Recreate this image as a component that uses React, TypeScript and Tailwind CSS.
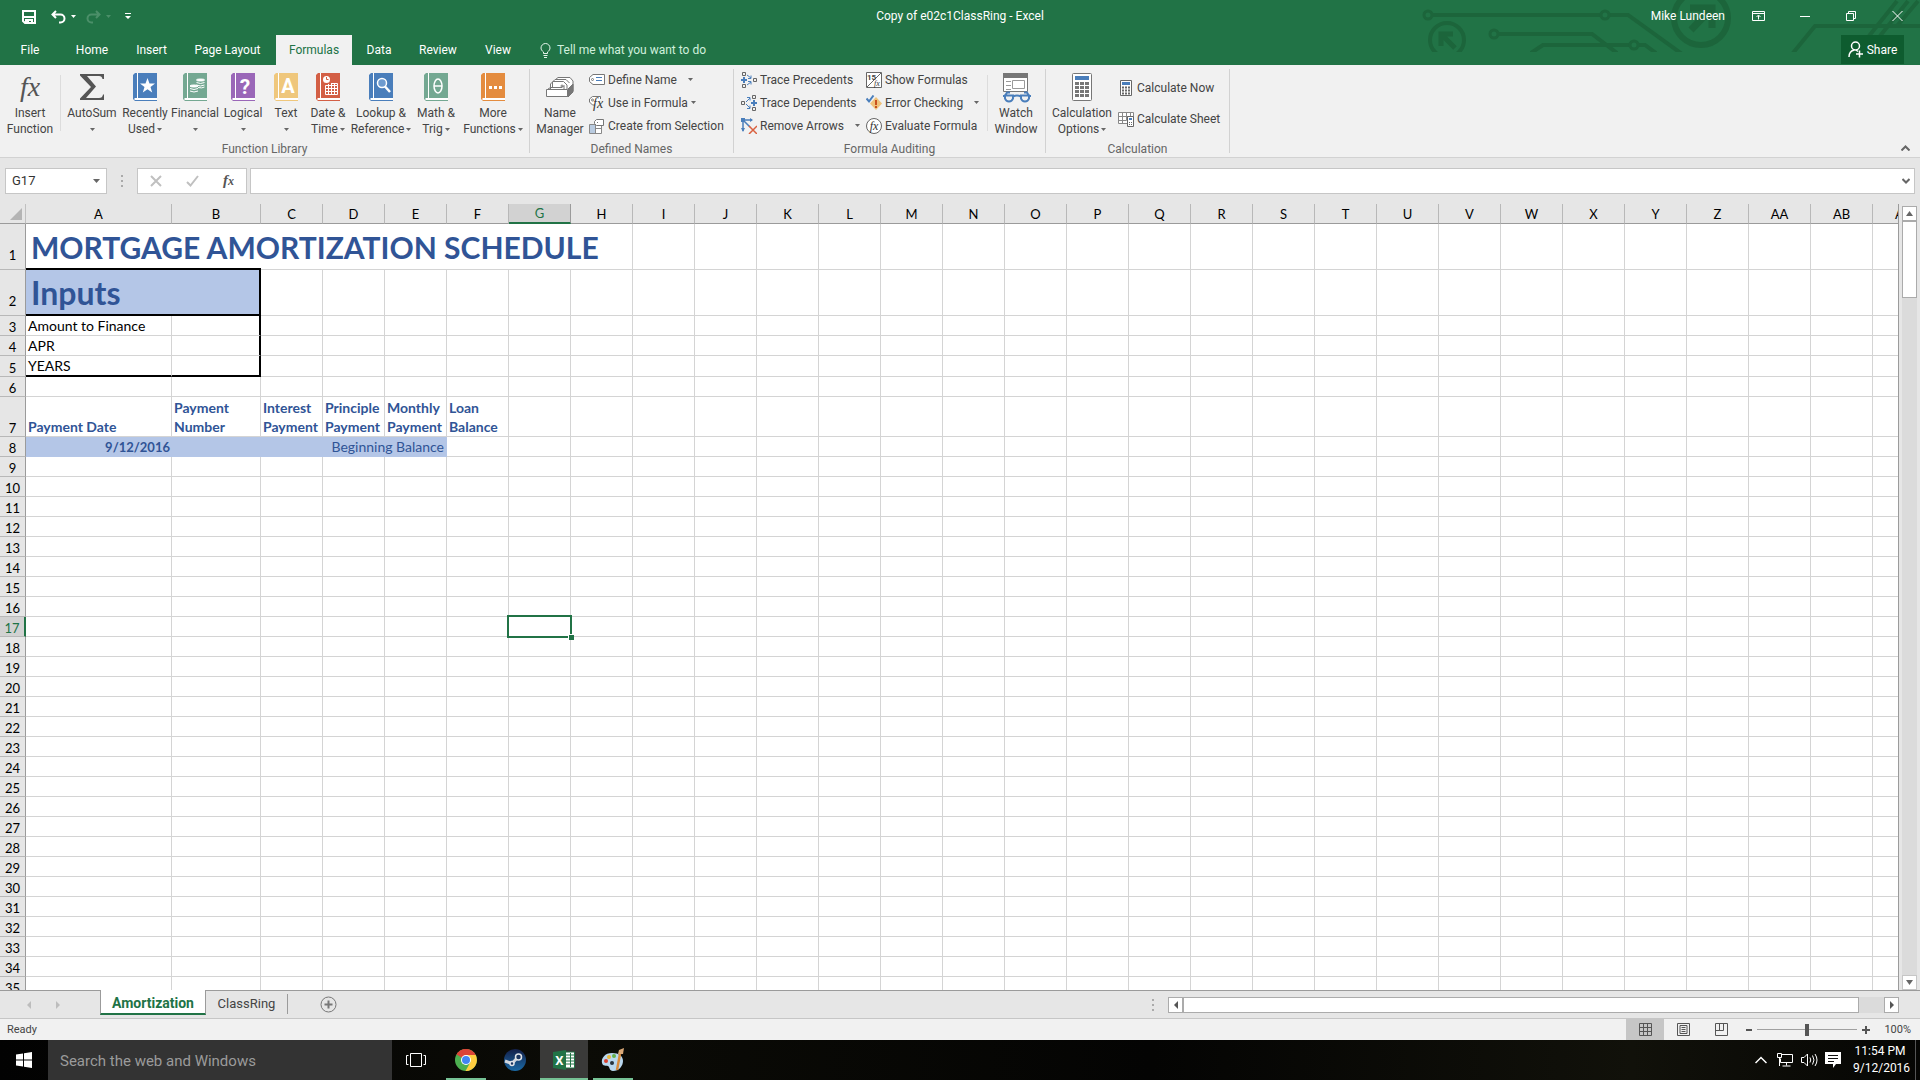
import type { ReactNode } from 'react';

const ROW_HEADER_WIDTH = 26;

const COLUMN_NAMES = [...'ABCDEFGHIJKLMNOPQRSTUVWXYZ'.split(''), 'AA', 'AB', 'AC'];

const columnWidth = (name: string) => (name === 'A' ? 146 : name === 'B' ? 89 : 62);

const rowHeight = (row: number) => {
    if (row <= 2) return 46;
    if (row === 5) return 21;
    if (row === 7) return 40;
    return 20;
};

const ROWS = Array.from({ length: 35 }, (_, i) => i + 1);

const TABLE_WIDTH = COLUMN_NAMES.reduce((sum, name) => sum + columnWidth(name), ROW_HEADER_WIDTH);

interface Cell {
    text?: string;
    className: string;
    span?: number;
}

const GRID = 'border-r border-b border-[#d4d4d4]';
const HEADING = 'px-0.5 align-bottom text-[14px] leading-[19px] font-bold text-[#305496] border-r border-b border-[#d4d4d4]';
const NO_RIGHT = 'border-b border-[#d4d4d4]';

const CELLS: Record<string, Cell> = {
    A1: {
        text: 'MORTGAGE AMORTIZATION SCHEDULE',
        className: 'pl-[5px] align-bottom whitespace-nowrap text-[30px] leading-[42px] font-bold text-[#305496] border-b-2 border-black',
    },
    B1: { className: 'border-b-2 border-black' },
    C1: { className: NO_RIGHT },
    D1: { className: NO_RIGHT },
    E1: { className: NO_RIGHT },
    F1: { className: NO_RIGHT },
    G1: { className: NO_RIGHT },
    A2: {
        text: 'Inputs',
        span: 2,
        className: 'pl-[5px] align-bottom bg-[#b4c6e7] text-[32px] leading-[42px] font-bold text-[#305496] border-r-2 border-b-2 border-black',
    },
    A3: { text: 'Amount to Finance', className: 'pl-0.5 align-bottom text-[14px] leading-[18px] whitespace-nowrap border-r border-b border-[#d4d4d4]' },
    A4: { text: 'APR', className: 'pl-0.5 align-bottom text-[14px] leading-[18px] border-r border-b border-[#d4d4d4]' },
    A5: { text: 'YEARS', className: 'pl-0.5 align-bottom text-[14px] leading-[18px] border-r border-b-2 border-r-[#d4d4d4] border-b-black' },
    B3: { className: 'border-r-2 border-b border-r-black border-b-[#d4d4d4]' },
    B4: { className: 'border-r-2 border-b border-r-black border-b-[#d4d4d4]' },
    B5: { className: 'border-r-2 border-b-2 border-black' },
    A7: { text: 'Payment Date', className: HEADING },
    B7: { text: 'Payment Number', className: HEADING },
    C7: { text: 'Interest Payment', className: HEADING },
    D7: { text: 'Principle Payment', className: HEADING },
    E7: { text: 'Monthly Payment', className: HEADING },
    F7: { text: 'Loan Balance', className: HEADING },
    A8: { text: '9/12/2016', className: 'pr-0.5 bg-[#b4c6e7] text-right text-[13px] leading-[19px] font-bold text-[#305496]' },
    B8: { className: 'bg-[#b4c6e7]' },
    C8: { className: 'bg-[#b4c6e7]' },
    D8: {
        text: 'Beginning Balance',
        span: 2,
        className: 'pr-[3px] bg-[#b4c6e7] text-right text-[14px] leading-[18px] whitespace-nowrap text-[#305496]',
    },
};

// Cells swallowed by a colSpan on their left
const COVERED = new Set(['B2', 'E8']);

const SELECTED = { column: 'G', row: 17 };

function Caret({ className = 'text-[#666]' }: { className?: string }) {
    return (
        <svg className={`inline-block shrink-0 ${className}`} width="5" height="3" viewBox="0 0 5 3" aria-hidden="true">
            <path d="M0 0h5L2.5 3z" fill="currentColor" />
        </svg>
    );
}

/* ---------- Title bar ---------- */

function CircuitPattern() {
    return (
        <svg className="pointer-events-none absolute top-0 right-0 z-10" width="500" height="52" viewBox="1420 0 500 52" fill="none" stroke="#1c653b" strokeWidth="4" aria-hidden="true">
            <circle cx="1428" cy="15" r="4" strokeWidth="3" />
            <path d="M1432 15H1601M1609 15H1628L1682 54" />
            <circle cx="1605" cy="15" r="4" strokeWidth="3" />
            <circle cx="1447" cy="40" r="17" />
            <path d="M1453 34h-12v12M1441 34l14 14" strokeWidth="5" />
            <circle cx="1494" cy="34" r="4" strokeWidth="3" />
            <path d="M1498 34H1592L1617 53" />
            <path d="M1531 53L1543 45H1630M1638 45H1645L1656 53" />
            <circle cx="1634" cy="45" r="4" strokeWidth="3" />
            <circle cx="1701" cy="18" r="27" strokeWidth="6" />
            <path d="M1690 8h22v20M1712 8l-21 22" strokeWidth="7" />
            <path d="M1793 53L1815 26H1920M1869 36L1897 1M1880 36L1908 1M1897 26L1918 1" />
        </svg>
    );
}

function TitleBar() {
    return (
        <header className="relative h-[35px] bg-[#217346] text-white">
            <CircuitPattern />
            <div className="relative z-20 grid h-full grid-cols-[1fr_auto_1fr] items-center pb-1.5">
                <div className="flex items-center pt-1 pl-[22px]">
                    <button aria-label="Save">
                        <svg width="14" height="14" viewBox="0 0 14 14" fill="none" stroke="#fff" strokeWidth="2">
                            <path d="M1 1h12v12H3L1 11zM2 7h10M4 13v-3h6v3" />
                            <path d="M6 11v2" />
                        </svg>
                    </button>
                    <button aria-label="Undo" className="ml-[15px]">
                        <svg width="15" height="14" viewBox="0 0 15 14" fill="none" stroke="#fff" strokeWidth="2">
                            <path d="M5 1L1.500 4.500 5 8M2 4.500h7.500a4 4 0 0 1 0 8H8" />
                        </svg>
                    </button>
                    <button aria-label="Undo list" className="ml-[5px] flex"><Caret className="text-white" /></button>
                    <button aria-label="Redo" disabled className="ml-2.5">
                        <svg width="15" height="14" viewBox="0 0 15 14" fill="none" stroke="#4b8f69" strokeWidth="2">
                            <path d="M10 1l3.500 3.500L10 8M13 4.500H5.500a4 4 0 0 0 0 8H7" />
                        </svg>
                    </button>
                    <button aria-label="Redo list" disabled className="ml-[5px] flex"><Caret className="text-[#4b8f69]" /></button>
                    <button aria-label="Customize Quick Access Toolbar" className="ml-3.5">
                        <svg width="6" height="7" viewBox="0 0 6 7" fill="#fff"><path d="M0 0h6v1H0zM0 3h6L3 6z" /></svg>
                    </button>
                </div>
                <h1 className="pt-[3px] text-[12px] leading-4">Copy of e02c1ClassRing - Excel</h1>
                <div className="flex items-center justify-end pt-[3px] pr-[17px]">
                    <span className="text-[12px] leading-4">Mike Lundeen</span>
                    <button aria-label="Ribbon Display Options" className="ml-[27px]">
                        <svg width="13" height="10" viewBox="0 0 13 10" fill="none" stroke="#fff">
                            <path d="M.5.5h12v9H.5zM.5 2.500h12M6.500 8.500v-4M4.500 6l2-2 2 2" />
                        </svg>
                    </button>
                    <button aria-label="Minimize" className="ml-[35px]">
                        <svg width="10" height="10" viewBox="0 0 10 10" stroke="#fff"><path d="M0 5.500h10" /></svg>
                    </button>
                    <button aria-label="Restore" className="ml-9">
                        <svg width="10" height="10" viewBox="0 0 10 10" fill="none" stroke="#fff">
                            <path d="M.5 2.500h7v7h-7zM2.500 2.500v-2h7v7h-2" />
                        </svg>
                    </button>
                    <button aria-label="Close" className="ml-9">
                        <svg width="11" height="10" viewBox="0 0 11 10" stroke="#fff"><path d="M.5 0l10 10M10.500 0L.5 10" /></svg>
                    </button>
                </div>
            </div>
        </header>
    );
}

const TABS = [
    { label: 'File', className: 'w-[60px]' },
    { label: 'Home', className: 'w-16' },
    { label: 'Insert', className: 'w-[55px]' },
    { label: 'Page Layout', className: 'w-[97px]' },
    { label: 'Formulas', className: 'w-[76px]' },
    { label: 'Data', className: 'w-[54px]' },
    { label: 'Review', className: 'w-16' },
    { label: 'View', className: 'w-14' },
];

function TabBar() {
    return (
        <nav className="flex h-[30px] bg-[#217346] text-[12px] leading-[30px] text-white" aria-label="Ribbon tabs">
            {TABS.map((tab) => (
                <button
                    key={tab.label}
                    className={`${tab.className} text-center whitespace-nowrap ${tab.label === 'Formulas' ? 'bg-[#f1f1f1] text-[#217346]' : ''}`}
                >
                    {tab.label}
                </button>
            ))}
            <button className="ml-3.5 flex items-center gap-1.5 text-[#d0f0dd]">
                <svg width="11" height="15" viewBox="0 0 11 15" fill="none" stroke="#e6f5ec">
                    <path d="M3.500 10.500V9C2 8 1 6.500 1 5a4.500 4.500 0 0 1 9 0c0 1.500-1 3-2.500 4v1.500zM3.500 12.500h4M4 14.500h3" />
                </svg>
                Tell me what you want to do
            </button>
            <button className="relative z-20 mr-4 ml-auto flex h-[29px] w-[63px] items-center justify-center gap-1 bg-[#0e5c2f]">
                <svg width="15" height="17" viewBox="0 0 15 17" fill="none" stroke="#fff" strokeWidth="1.500">
                    <circle cx="7.500" cy="5" r="4" />
                    <path d="M1 16c0-4 2.500-6.500 5.500-7M8 9l2 1.500M8 13h7M11.500 9.500v7" />
                </svg>
                Share
            </button>
        </nav>
    );
}

/* ---------- Ribbon icons ---------- */

function Book({ color, children }: { color: string; children: ReactNode }) {
    return (
        <svg width="24" height="28" viewBox="0 0 24 28" aria-hidden="true">
            <path d="M2 0h22v28H2l-2-2V2z" fill={color} />
            <path d="M4.500 0v25" stroke="#fff" />
            <path d="M1 26l1-1h22v2H2z" fill="#fff" />
            {children}
        </svg>
    );
}

function LibraryIcon({ name }: { name: string }) {
    switch (name) {
        case 'AutoSum':
            return (
                <svg width="24" height="28" viewBox="0 0 24 28" aria-hidden="true">
                    <path d="M0 1h24v5h-1.500Q22 3 19 3H7l9 10.500L6 25h13q3.500 0 4-3.500h1V27H0v-1.500L11 14 0 2.500z" fill="#555" />
                </svg>
            );
        case 'Recently Used':
            return (
                <Book color="#4a7ebb">
                    <path d="M14.500 5l2 5.500h5.500l-4.500 3.500 1.700 5.500-4.700-3.300-4.700 3.300 1.700-5.500L7 10.500h5.500z" fill="#fff" />
                </Book>
            );
        case 'Financial':
            return (
                <Book color="#74a892">
                    <g stroke="#fff" fill="#fff">
                        <ellipse cx="17.500" cy="7" rx="4" ry="1" />
                        <path d="M13.500 9.500q4 2 8 0M13.500 12q4 2 8 0M15 14.500q4 1 6.500-.5" fill="none" />
                        <ellipse cx="11" cy="13" rx="4" ry="1" />
                        <path d="M7 15.500q4 2 8 0M7 18q4 2 8 0" fill="none" />
                    </g>
                </Book>
            );
        case 'Logical':
            return (
                <Book color="#9a67b8">
                    <text x="14" y="21" textAnchor="middle" fontSize="21" fontWeight="700" fill="#fff">?</text>
                </Book>
            );
        case 'Text':
            return (
                <Book color="#efc77c">
                    <text x="14" y="20" textAnchor="middle" fontSize="20" fontWeight="700" fill="#fff">A</text>
                </Book>
            );
        case 'Date & Time':
            return (
                <Book color="#d35f45">
                    <circle cx="10.500" cy="6.500" r="3.500" fill="#fff" />
                    <path d="M10.500 4v2.500h2" stroke="#d35f45" fill="none" />
                    <path d="M9.500 12.500h12v9h-12zM9.500 15.500h12M9.500 18.500h12M12.500 11v10M15.500 10v11M18.500 10v11M15 10.500h6.500v2" stroke="#fff" fill="none" />
                </Book>
            );
        case 'Lookup & Reference':
            return (
                <Book color="#4a7ebb">
                    <circle cx="13" cy="10" r="4.500" stroke="#fff" strokeWidth="1.500" fill="#6e9bcf" />
                    <path d="M16 13.500l5 5.500" stroke="#fff" strokeWidth="2.500" />
                </Book>
            );
        case 'Math & Trig':
            return (
                <Book color="#74a892">
                    <ellipse cx="14" cy="13" rx="4" ry="7" stroke="#fff" strokeWidth="1.500" fill="none" />
                    <path d="M10 13h8" stroke="#fff" strokeWidth="1.500" />
                </Book>
            );
        default:
            return (
                <Book color="#e48c3f">
                    <path d="M8 13h3v3H8zM13 13h3v3h-3zM18 13h3v3h-3z" fill="#fff" />
                </Book>
            );
    }
}

function NameManagerIcon() {
    return (
        <svg width="28" height="28" viewBox="0 0 28 28" fill="none" stroke="#777" aria-hidden="true">
            <path d="M9 12V7l3-2.500h12l3 3.500v10l-6 6" fill="#fff" />
            <path d="M22 16l5-5v8l-5 5z" fill="#777" />
            <path d="M6.500 15V9L9 6.500h11L23.500 10M4.500 16v-5L7 8.500h10.500L21 12v4" fill="#fff" />
            <path d="M2 16l2.500-1.500H16l2-2v4" />
            <circle cx="16" cy="13" r="1" />
            <path d="M.5 16.500h21v7H.5z" fill="#fff" />
        </svg>
    );
}

function WatchIcon() {
    return (
        <svg width="30" height="30" viewBox="-1 0 30 30" fill="none" aria-hidden="true">
            <path d="M1.500 1.500h24v17h-24z" fill="#fff" stroke="#777" />
            <path d="M1 0h25v5H1z" fill="#777" />
            <path d="M4 8.500h5M4 12.500h5M4 16.500h5M10.500 7.500h12v8h-12z" stroke="#999" />
            <path d="M1 19h28v9H1z" fill="#f1f1f1" />
            <path d="M3 23l2-3.500h3M27 23l-2-3.500h-3M3 22.500h8v3q-1 3-4 3t-4-3zM19 22.500h8v3q-1 3-4 3t-4-3zM11 23.500q4-2 8 0M1 23h2M27 23h2" stroke="#4a7ebb" strokeWidth="2" />
        </svg>
    );
}

function CalculatorIcon({ small }: { small?: boolean }) {
    return (
        <svg width={small ? 12 : 20} height={small ? 16 : 28} viewBox={small ? '0 0 12 16' : '0 0 20 28'} aria-hidden="true">
            {small ? (
                <>
                    <path d="M.5.5h11v15H.5z" fill="#fff" stroke="#666" />
                    <path d="M2 2h8v3H2z" fill="#4a7ebb" />
                    <path d="M2 7.500h8M2 10.500h8M2 13.500h8" stroke="#666" strokeWidth="2" strokeDasharray="2 1" />
                </>
            ) : (
                <>
                    <rect x=".5" y=".5" width="19" height="27" rx="1" fill="#fff" stroke="#777" />
                    <path d="M3 3h14v4H3z" fill="#4a7ebb" />
                    <path d="M3 10.500h14M3 14.500h14M3 18.500h14M3 22.500h14" stroke="#777" strokeWidth="3" strokeDasharray="4 1" />
                </>
            )}
        </svg>
    );
}

function SmallIcon({ name }: { name: string }) {
    return (
        <svg width="16" height="16" viewBox="0 0 16 16" fill="none" aria-hidden="true" className="shrink-0">
            {name === 'Define Name' && (
                <>
                    <path d="M4 2.500h11.500v10H4L.5 9.500v-4z" fill="#fff" stroke="#777" />
                    <circle cx="3.500" cy="7.500" r="1" stroke="#777" />
                    <path d="M7 5.500h6M7 8.500h6" stroke="#4a7ebb" />
                </>
            )}
            {name === 'Use in Formula' && (
                <>
                    <path d="M6 10H3.500L.5 7V4l3-2.500h8V4" fill="#fff" stroke="#777" />
                    <circle cx="3.500" cy="5" r="1" stroke="#777" />
                    <text x="4" y="13" fontSize="14" fontStyle="italic" fill="#333" className="font-['Liberation_Serif',serif]">fx</text>
                </>
            )}
            {name === 'Create from Selection' && (
                <>
                    <path d="M.5 6.500h12v9H.5zM.5 10.500h12M6.500 6.500v9" fill="#fff" stroke="#888" />
                    <path d="M1 7h5v8H1z" fill="#b9cbe0" />
                    <path d="M7.500 1.500h7v6h-7l-2-2v-2z" fill="#fff" stroke="#777" />
                    <path d="M8 4.500h1" stroke="#777" />
                </>
            )}
            {name === 'Trace Precedents' && (
                <>
                    <path d="M1.500.5h3v3h-3zM1.500 12.500h3v3h-3zM12.500 6.500h3v3h-3z" stroke="#666" />
                    <path d="M0 8h6M3 5v6" stroke="#4a7ebb" strokeWidth="2" />
                    <path d="M6 3l4 3M10 10l-4 3M10 3.500v3H7M10 12.500v-3H7" stroke="#4a7ebb" />
                </>
            )}
            {name === 'Trace Dependents' && (
                <>
                    <path d="M11.500.5h3v3h-3zM11.500 12.500h3v3h-3zM.5 6.500h3v3h-3z" stroke="#666" />
                    <path d="M10 8h6M13 5v6" stroke="#4a7ebb" strokeWidth="2" />
                    <path d="M5 7l4-4M5 9l4 4M6 2.500h3v3M6 13.500h3v-3" stroke="#4a7ebb" />
                </>
            )}
            {name === 'Remove Arrows' && (
                <>
                    <path d="M2 2v11M2 2h9M3 3l6 6" stroke="#4a7ebb" strokeWidth="1.500" />
                    <path d="M0 0h4v4H0zM9 0v4l3-2zM0 10h4l-2 4z" fill="#4a7ebb" />
                    <path d="M8 8l8 8M16 8l-8 8" stroke="#d9603f" strokeWidth="1.500" />
                </>
            )}
            {name === 'Show Formulas' && (
                <>
                    <path d="M.5.5h15v15H.5zM15 1L1 15" fill="#fff" stroke="#666" />
                    <text x="1" y="8" fontSize="8" fontWeight="700" fill="#444">15</text>
                    <text x="8" y="14" fontSize="8" fontStyle="italic" fill="#333" className="font-['Liberation_Serif',serif]">fx</text>
                </>
            )}
            {name === 'Error Checking' && (
                <>
                    <path d="M10 2l6 6.500-6 6.500-6-6.500z" fill="#f0c27a" />
                    <path d="M10 5v5M10 11v2" stroke="#c8501e" strokeWidth="2" />
                    <path d="M.5 3.500l2.500 3L7.500.5" stroke="#4a7ebb" strokeWidth="2" />
                </>
            )}
            {name === 'Evaluate Formula' && (
                <>
                    <circle cx="8" cy="8" r="7.500" fill="#fff" stroke="#666" />
                    <text x="8" y="12" textAnchor="middle" fontSize="12" fontStyle="italic" fill="#333" className="font-['Liberation_Serif',serif]">fx</text>
                </>
            )}
            {name === 'Calculate Sheet' && (
                <>
                    <path d="M.5 1.500h15v11H.5zM.5 5.500h15M.5 9.500h8M4.500 1.500v11M8.500 1.500v8M12.500 1.500v4" fill="#fff" stroke="#888" />
                    <path d="M9.500 5.500h6v10h-6z" fill="#fff" stroke="#666" />
                    <path d="M11 7h3v2h-3z" fill="#4a7ebb" />
                    <path d="M11 11.500h3M11 13.500h3" stroke="#666" strokeDasharray="1 1" />
                </>
            )}
        </svg>
    );
}

/* ---------- Ribbon ---------- */

function BigButton({ icon, first, second, caret, className }: {
    icon: ReactNode;
    first: string;
    second?: string;
    caret?: boolean;
    className: string;
}) {
    return (
        <button className={`flex shrink-0 flex-col items-center ${className}`}>
            <span className="flex h-8 items-start justify-center">{icon}</span>
            <span className="text-[12px] leading-4 whitespace-nowrap">{first}</span>
            <span className="flex h-4 items-center gap-0.5 text-[12px] leading-4 whitespace-nowrap">
                {second}
                {caret && <Caret />}
            </span>
        </button>
    );
}

function SmallButton({ name, caret, icon }: { name: string; caret?: string; icon?: ReactNode }) {
    return (
        <button className="flex h-[23px] items-center gap-[3px] text-[12px] leading-4 whitespace-nowrap">
            {icon ?? <SmallIcon name={name} />}
            {name}
            {caret !== undefined && <span className={`flex ${caret}`}><Caret /></span>}
        </button>
    );
}

function Group({ label, className, children }: { label: string; className: string; children: ReactNode }) {
    return (
        <section className={`flex shrink-0 flex-col ${className}`} aria-label={label}>
            <div className="flex h-[72px]">{children}</div>
            <h2 className="text-center text-[12px] leading-4 text-[#666]">{label}</h2>
        </section>
    );
}

const Divider = () => <div className="my-1 h-[84px] w-px shrink-0 bg-[#d2d2d2]" />;

const LIBRARY = [
    { name: 'AutoSum', first: 'AutoSum', className: 'w-[50px]' },
    { name: 'Recently Used', first: 'Recently', second: 'Used', className: 'w-14' },
    { name: 'Financial', first: 'Financial', className: 'w-11' },
    { name: 'Logical', first: 'Logical', className: 'w-[52px]' },
    { name: 'Text', first: 'Text', className: 'w-[34px]' },
    { name: 'Date & Time', first: 'Date &', second: 'Time', className: 'w-[50px]' },
    { name: 'Lookup & Reference', first: 'Lookup &', second: 'Reference', className: 'w-14' },
    { name: 'Math & Trig', first: 'Math &', second: 'Trig', className: 'w-[54px]' },
    { name: 'More Functions', first: 'More', second: 'Functions', className: 'w-[60px]' },
];

function Ribbon() {
    return (
        <div className="flex h-[93px] border-b border-[#d2d2d2] bg-[#f1f1f1] text-[#444]">
            <Group label="Function Library" className="w-[529px] pt-2">
                <BigButton
                    className="ml-[5px] w-[50px]"
                    first="Insert"
                    second="Function"
                    icon={(
                        <svg width="32" height="32" viewBox="0 0 32 32" aria-hidden="true">
                            <text x="16" y="23" textAnchor="middle" fontSize="28" fontStyle="italic" fill="#555" className="font-['Liberation_Serif',serif]">fx</text>
                        </svg>
                    )}
                />
                <div className="mt-0.5 mr-1.5 ml-[5px] h-14 w-px bg-[#dcdcdc]" />
                {LIBRARY.map((item) => (
                    <BigButton
                        key={item.name}
                        className={item.className}
                        first={item.first}
                        second={item.second}
                        caret
                        icon={<LibraryIcon name={item.name} />}
                    />
                ))}
            </Group>
            <Divider />
            <Group label="Defined Names" className="w-[203px] pt-2">
                <BigButton className="ml-1 w-[52px]" first="Name" second="Manager" icon={<NameManagerIcon />} />
                <div className="-mt-[5px] ml-[3px] flex flex-col">
                    <SmallButton name="Define Name" caret="ml-2" />
                    <SmallButton name="Use in Formula" caret="" />
                    <SmallButton name="Create from Selection" />
                </div>
            </Group>
            <Divider />
            <Group label="Formula Auditing" className="w-[311px] pt-2">
                <div className="-mt-[5px] ml-[7px] flex w-[125px] flex-col">
                    <SmallButton name="Trace Precedents" />
                    <SmallButton name="Trace Dependents" />
                    <SmallButton name="Remove Arrows" caret="ml-2" />
                </div>
                <div className="-mt-[5px] flex w-[121px] flex-col">
                    <SmallButton name="Show Formulas" />
                    <SmallButton name="Error Checking" caret="ml-2" />
                    <SmallButton name="Evaluate Formula" />
                </div>
                <div className="mt-0.5 h-14 w-px bg-[#dcdcdc]" />
                <BigButton className="ml-[3px] w-[50px]" first="Watch" second="Window" icon={<WatchIcon />} />
            </Group>
            <Divider />
            <Group label="Calculation" className="w-[183px] pt-2">
                <BigButton className="ml-1 w-[64px]" first="Calculation" second="Options" caret icon={<CalculatorIcon />} />
                <div className="mt-[3px] flex flex-col gap-2">
                    <SmallButton
                        name="Calculate Now"
                        icon={<span className="flex w-5 justify-end pr-0.5"><CalculatorIcon small /></span>}
                    />
                    <SmallButton
                        name="Calculate Sheet"
                        icon={<span className="flex w-5 justify-end"><SmallIcon name="Calculate Sheet" /></span>}
                    />
                </div>
            </Group>
            <Divider />
            <button aria-label="Collapse the Ribbon" className="mt-auto mr-2.5 mb-1.5 ml-auto">
                <svg width="9" height="6" viewBox="0 0 9 6" fill="none" stroke="#666" strokeWidth="2"><path d="M.5 5.500l4-4 4 4" /></svg>
            </button>
        </div>
    );
}

function DragDots() {
    return (
        <svg width="2" height="12" viewBox="0 0 2 12" fill="#aaa" aria-hidden="true">
            <path d="M0 0h2v2H0zM0 5h2v2H0zM0 10h2v2H0z" />
        </svg>
    );
}

function FormulaBar() {
    return (
        <div className="flex h-[46px] items-center bg-[#e6e6e6] px-[5px]">
            <div className="flex h-[26px] w-[102px] items-center border border-[#c6c6c6] bg-white pr-1.5">
                <input aria-label="Name Box" defaultValue="G17" className="min-w-0 flex-1 bg-transparent pl-1.5 text-[13px] leading-4 text-[#333] outline-none" />
                <button aria-label="Name Box list">
                    <svg width="7" height="4" viewBox="0 0 7 4" fill="#666"><path d="M0 0h7L3.500 4z" /></svg>
                </button>
            </div>
            <div className="flex w-[30px] justify-center"><DragDots /></div>
            <div className="flex h-[26px] w-[110px] items-center justify-around border border-[#c6c6c6] bg-white">
                <button aria-label="Cancel" disabled>
                    <svg width="12" height="12" viewBox="0 0 12 12" stroke="#c0c0c0" strokeWidth="2"><path d="M1 1l10 10M11 1L1 11" /></svg>
                </button>
                <button aria-label="Enter" disabled>
                    <svg width="13" height="12" viewBox="0 0 13 12" fill="none" stroke="#c0c0c0" strokeWidth="2"><path d="M1 7l3.500 3.500L12 1" /></svg>
                </button>
                <button aria-label="Insert Function" className="pb-0.5 font-['Liberation_Serif',serif] text-[15px] leading-5 font-bold text-[#555] italic">
                    f<span className="text-[12px]">x</span>
                </button>
            </div>
            <div className="ml-[3px] flex h-[26px] min-w-0 flex-1 items-center border border-[#c6c6c6] bg-white pr-1">
                <input aria-label="Formula Bar" className="min-w-0 flex-1 bg-transparent px-1 outline-none" />
                <button aria-label="Expand Formula Bar">
                    <svg width="8" height="6" viewBox="0 0 8 6" fill="none" stroke="#666" strokeWidth="2"><path d="M.5 1L4 4.500 7.500 1" /></svg>
                </button>
            </div>
        </div>
    );
}

/* ---------- Sheet ---------- */

function SheetGrid() {
    return (
        <table
            className="table-fixed border-separate border-spacing-0 font-[Lato,sans-serif] text-black"
            style={{ width: TABLE_WIDTH }}
        >
            <colgroup>
                <col style={{ width: ROW_HEADER_WIDTH }} />
                {COLUMN_NAMES.map((name) => (
                    <col key={name} style={{ width: columnWidth(name) }} />
                ))}
            </colgroup>
            <thead>
                <tr className="h-5">
                    <th className="h-5 border-r border-b border-r-[#c0c0c0] border-b-[#9b9b9b] bg-[#e6e6e6] p-0">
                        <svg className="mr-[3px] ml-auto" width="12" height="12" viewBox="0 0 12 12" aria-label="Select all">
                            <path d="M12 0v12H0z" fill="#b4b4b4" />
                        </svg>
                    </th>
                    {COLUMN_NAMES.map((name) => (
                        <th
                            key={name}
                            scope="col"
                            className={`h-5 p-0 text-[13px] leading-[18px] font-normal ${
                                name === SELECTED.column
                                    ? 'border-r border-b-2 border-r-[#9b9b9b] border-b-[#217346] bg-[#d2d2d2] text-[#217346]'
                                    : 'border-r border-b border-r-[#b8b8b8] border-b-[#9b9b9b] bg-[#e6e6e6]'
                            }`}
                        >
                            {name}
                        </th>
                    ))}
                </tr>
            </thead>
            <tbody>
                {ROWS.map((row) => (
                    <tr key={row} style={{ height: rowHeight(row) }}>
                        <th
                            scope="row"
                            className={`px-0 pt-0 align-bottom text-[13px] leading-4 font-normal ${row <= 2 ? 'pb-1.5' : 'pb-0'} ${
                                row === SELECTED.row
                                    ? 'border-r-2 border-b border-r-[#217346] border-b-[#b8b8b8] bg-[#d2d2d2] text-[#217346]'
                                    : 'border-r border-b border-r-[#9b9b9b] border-b-[#b8b8b8] bg-[#e6e6e6]'
                            }`}
                        >
                            {row}
                        </th>
                        {COLUMN_NAMES.map((name) => {
                            const key = `${name}${row}`;
                            if (COVERED.has(key)) return null;
                            const cell = CELLS[key];
                            const selected = name === SELECTED.column && row === SELECTED.row;
                            return (
                                <td key={key} colSpan={cell?.span} className={`relative p-0 ${cell?.className ?? GRID}`}>
                                    {cell?.text}
                                    {selected && (
                                        <div className="absolute -inset-0.5 z-10 border-2 border-[#217346]">
                                            <div className="absolute -right-1 -bottom-1 size-1.5 border-t border-l border-white bg-[#217346]" />
                                        </div>
                                    )}
                                </td>
                            );
                        })}
                    </tr>
                ))}
            </tbody>
        </table>
    );
}

function VerticalScrollbar() {
    return (
        <div className="flex w-[21px] shrink-0 flex-col bg-[#e6e6e6] px-[3px] pt-0.5">
            <button aria-label="Scroll up" className="flex h-[15px] items-center justify-center border border-[#ababab] bg-white">
                <svg width="7" height="5" viewBox="0 0 7 5" fill="#666"><path d="M3.500 0L7 5H0z" /></svg>
            </button>
            <div className="flex-1 bg-[#dbdbdb]">
                <div className="h-[77px] border border-[#ababab] bg-white" />
            </div>
            <button aria-label="Scroll down" className="flex h-[15px] items-center justify-center border border-[#c6c6c6] bg-white">
                <svg width="7" height="5" viewBox="0 0 7 5" fill="#666"><path d="M0 0h7L3.500 5z" /></svg>
            </button>
        </div>
    );
}

function SheetBar() {
    return (
        <div className="flex h-7 border-t border-[#9b9b9b] bg-[#e6e6e6] pr-[21px]">
            <div className="flex w-[100px] items-center pl-[27px]">
                <button aria-label="Previous sheets" disabled>
                    <svg width="4" height="8" viewBox="0 0 4 8" fill="#bdbdbd"><path d="M4 0v8L0 4z" /></svg>
                </button>
                <button aria-label="Next sheets" disabled className="ml-[25px]">
                    <svg width="4" height="8" viewBox="0 0 4 8" fill="#bdbdbd"><path d="M0 0v8l4-4z" /></svg>
                </button>
            </div>
            <button className="-mt-px h-[25px] w-[106px] border-x border-b-2 border-x-[#9b9b9b] border-b-[#217346] bg-white pt-0.5 text-[14px] leading-4 font-bold text-[#217346]">
                Amortization
            </button>
            <button className="mt-[3px] mb-1 w-[82px] border-r border-[#9b9b9b] text-[13px] leading-4 text-[#444]">ClassRing</button>
            <button aria-label="New sheet" className="ml-8">
                <svg width="17" height="17" viewBox="0 0 17 17" fill="none" stroke="#777">
                    <circle cx="8.500" cy="8.500" r="7.500" />
                    <path d="M4.500 8.500h8M8.500 4.500v8" strokeWidth="2" />
                </svg>
            </button>
            <div className="ml-auto flex w-[747px] max-w-[50%] items-center">
                <DragDots />
                <button aria-label="Scroll left" className="ml-3.5 flex h-4 w-[15px] items-center justify-center border border-[#ababab] bg-white">
                    <svg width="4" height="8" viewBox="0 0 4 8" fill="#555"><path d="M4 0v8L0 4z" /></svg>
                </button>
                <div className="h-4 flex-1 bg-[#dbdbdb] pr-[25px]">
                    <div className="h-full border border-[#ababab] bg-white" />
                </div>
                <button aria-label="Scroll right" className="flex h-4 w-[15px] items-center justify-center border border-[#ababab] bg-white">
                    <svg width="4" height="8" viewBox="0 0 4 8" fill="#555"><path d="M0 0v8l4-4z" /></svg>
                </button>
            </div>
        </div>
    );
}

function StatusBar() {
    return (
        <footer className="flex h-[22px] items-center border-t border-[#c6c6c6] bg-[#f1f1f1] pr-[9px] pl-[7px] text-[11px] leading-4 text-[#444]">
            <span>Ready</span>
            <button aria-label="Normal view" className="ml-auto flex h-full w-[38px] items-center justify-center bg-[#c6c6c6]">
                <svg width="13" height="13" viewBox="0 0 13 13" fill="none" stroke="#555"><path d="M.5.5h12v12H.5zM.5 4.500h12M.5 8.500h12M4.500.5v12M8.500.5v12" /></svg>
            </button>
            <button aria-label="Page Layout view" className="flex w-[38px] justify-center">
                <svg width="13" height="13" viewBox="0 0 13 13" fill="none" stroke="#555"><path d="M.5.5h12v12H.5zM3 2.500h7v8H3zM4.500 4.500h4M4.500 6.500h4M4.500 8.500h4" /></svg>
            </button>
            <button aria-label="Page Break Preview" className="flex w-[38px] justify-center">
                <svg width="13" height="13" viewBox="0 0 13 13" fill="none" stroke="#555"><path d="M.5.5h12v12H.5zM4.500.5v7M8.500.5v7h-8" /></svg>
            </button>
            <button aria-label="Zoom out" className="ml-1.5 h-0.5 w-1.5 bg-[#555]" />
            <input
                type="range"
                aria-label="Zoom"
                min={0}
                max={100}
                defaultValue={50}
                className="mx-[5px] h-3 w-[100px] appearance-none bg-transparent bg-[linear-gradient(#a0a0a0,#a0a0a0)] bg-[length:100%_1px] bg-center bg-no-repeat [&::-webkit-slider-thumb]:h-3 [&::-webkit-slider-thumb]:w-1 [&::-webkit-slider-thumb]:appearance-none [&::-webkit-slider-thumb]:bg-[#555]"
            />
            <button aria-label="Zoom in">
                <svg width="8" height="8" viewBox="0 0 8 8" stroke="#555" strokeWidth="2"><path d="M0 4h8M4 0v8" /></svg>
            </button>
            <button className="w-[41px] text-right">100%</button>
        </footer>
    );
}

/* ---------- Windows taskbar ---------- */

function ChromeIcon() {
    return (
        <svg width="22" height="22" viewBox="0 0 22 22" aria-hidden="true">
            <circle cx="11" cy="11" r="11" fill="#4caf50" />
            <path d="M11 11L1.500 5.500A11 11 0 0 1 20.500 5.500z" fill="#db4437" />
            <path d="M1.500 5.500A11 11 0 0 1 20.500 6H11z" fill="#db4437" />
            <path d="M11 6h9.700A11 11 0 0 1 10.500 22l5-9z" fill="#ffcd40" />
            <circle cx="11" cy="11" r="5" fill="#fff" />
            <circle cx="11" cy="11" r="4" fill="#4285f4" />
        </svg>
    );
}

function SteamIcon() {
    return (
        <svg width="22" height="22" viewBox="0 0 22 22" aria-hidden="true">
            <defs>
                <linearGradient id="steam" x1="0" y1="0" x2="0" y2="1">
                    <stop offset="0" stopColor="#14204a" />
                    <stop offset="1" stopColor="#1b6aa5" />
                </linearGradient>
            </defs>
            <circle cx="11" cy="11" r="11" fill="url(#steam)" />
            <path d="M1 12l7 2.500L14 8" stroke="#cfd5dc" strokeWidth="3" fill="none" />
            <circle cx="14.500" cy="8" r="3" fill="#1b3560" stroke="#dfe3e8" strokeWidth="1.500" />
            <circle cx="8" cy="14.500" r="2" fill="#1b3560" stroke="#dfe3e8" strokeWidth="1.500" />
        </svg>
    );
}

function ExcelIcon() {
    return (
        <svg width="22" height="20" viewBox="0 0 22 20" aria-hidden="true">
            <path d="M12 2h9.500v16H12z" fill="#fff" stroke="#217346" />
            <path d="M13 5h8M13 8h8M13 11h8M13 14h8M17.500 3v14" stroke="#217346" />
            <path d="M0 2l13-2v20L0 18z" fill="#217346" />
            <text x="6.500" y="15" textAnchor="middle" fontSize="13" fontWeight="700" fill="#fff">X</text>
        </svg>
    );
}

function PaintIcon() {
    return (
        <svg width="24" height="24" viewBox="0 0 24 24" aria-hidden="true">
            <path d="M11 5C4 5 0 10 1 15c1 4 4 2 6 3s1 5 5 5c6 0 10-5 10-10S18 5 11 5z" fill="#b9d7ee" />
            <circle cx="5" cy="13" r="2" fill="#d8402f" />
            <circle cx="8" cy="9" r="2" fill="#e9b93a" />
            <circle cx="13" cy="8" r="2" fill="#64b04a" />
            <circle cx="11" cy="15" r="2" fill="#26323c" />
            <path d="M16 22l3-16" stroke="#d98a3a" strokeWidth="2.500" />
            <path d="M17 6l1-4 5-2-1 6z" fill="#d9a877" />
        </svg>
    );
}

function Taskbar() {
    return (
        <div className="flex h-10 bg-[#070705] bg-[linear-gradient(90deg,#020202,#0b0b06_30%,#040403_60%,#11110a_85%,#060604)] text-white">
            <button aria-label="Start" className="flex w-12 items-center justify-center">
                <svg width="16" height="16" viewBox="0 0 16 16" fill="#fff"><path d="M0 2.500l7-1v6H0zM8 1.200L16 0v7.500H8zM0 8.500h7v6l-7-1zM8 8.500h8V16l-8-1.200z" /></svg>
            </button>
            <input
                aria-label="Search the web and Windows"
                placeholder="Search the web and Windows"
                className="w-[344px] bg-[#333] px-3 pt-0.5 text-[15px] leading-5 outline-none placeholder:text-[#9b9b9b]"
            />
            <button aria-label="Task View" className="flex w-12 items-center justify-center">
                <svg width="20" height="14" viewBox="0 0 20 14" fill="none" stroke="#fff"><path d="M4.500.5h11v13h-11zM2.500 2.500h-2v9h2M17.500 2.500h2v9h-2" /></svg>
            </button>
            <button aria-label="Google Chrome" className="mx-1.5 flex w-10 items-center justify-center border-b-2 border-[#76c295] pt-0.5">
                <ChromeIcon />
            </button>
            <button aria-label="Steam" className="flex w-[46px] items-center justify-center"><SteamIcon /></button>
            <button aria-label="Excel" className="ml-0.5 flex w-12 items-center justify-center border-b-2 border-[#76c295] bg-[#3a3a39] pt-0.5"><ExcelIcon /></button>
            <button aria-label="Paint" className="ml-[5px] flex w-10 items-center justify-center border-b-2 border-[#76c295] pt-0.5"><PaintIcon /></button>
            <div className="mr-1 ml-auto flex items-center border-r border-[#555] pr-2">
                <button aria-label="Show hidden icons">
                    <svg width="12" height="8" viewBox="0 0 12 8" fill="none" stroke="#fff" strokeWidth="1.500"><path d="M.5 7L6 1.500 11.500 7" /></svg>
                </button>
                <button aria-label="Network" className="ml-2.5">
                    <svg width="16" height="14" viewBox="0 0 16 14" fill="none" stroke="#fff"><path d="M4.500 1.500h11v8h-12v-4M9.500 9.500v3M5.500 13h8M.5.5h4v4h-4zM2.500 4.500V13" /></svg>
                </button>
                <button aria-label="Volume" className="ml-2">
                    <svg width="17" height="14" viewBox="0 0 17 14" fill="none" stroke="#fff"><path d="M.5 4.500H3L6.500 1v12L3 9.500H.5zM9 4.500q1.500 2.500 0 5M11.500 2.500q3 4.500 0 9M14 1q4 6 0 12" /></svg>
                </button>
                <button aria-label="Action Center" className="ml-[7px]">
                    <svg width="16" height="16" viewBox="0 0 16 16"><path d="M0 0h16v12h-5l-3 4v-4H0z" fill="#fff" /><path d="M3 3.500h10M3 6.500h10M3 9.500h6" stroke="#111" /></svg>
                </button>
                <div className="ml-3 w-[54px] text-center text-[12px] leading-[17px] whitespace-nowrap">
                    <div>11:54 PM</div>
                    <div>9/12/2016</div>
                </div>
            </div>
        </div>
    );
}

export default function App() {
    return (
        <div className="flex h-screen flex-col overflow-hidden bg-[#e6e6e6] font-[Roboto,'Open_Sans',sans-serif]">
            <TitleBar />
            <TabBar />
            <Ribbon />
            <FormulaBar />
            <main className="flex min-h-0 flex-1">
                <div className="min-w-0 flex-1 overflow-hidden border-r border-[#9b9b9b] bg-white">
                    <SheetGrid />
                </div>
                <VerticalScrollbar />
            </main>
            <SheetBar />
            <StatusBar />
            <Taskbar />
        </div>
    );
}
